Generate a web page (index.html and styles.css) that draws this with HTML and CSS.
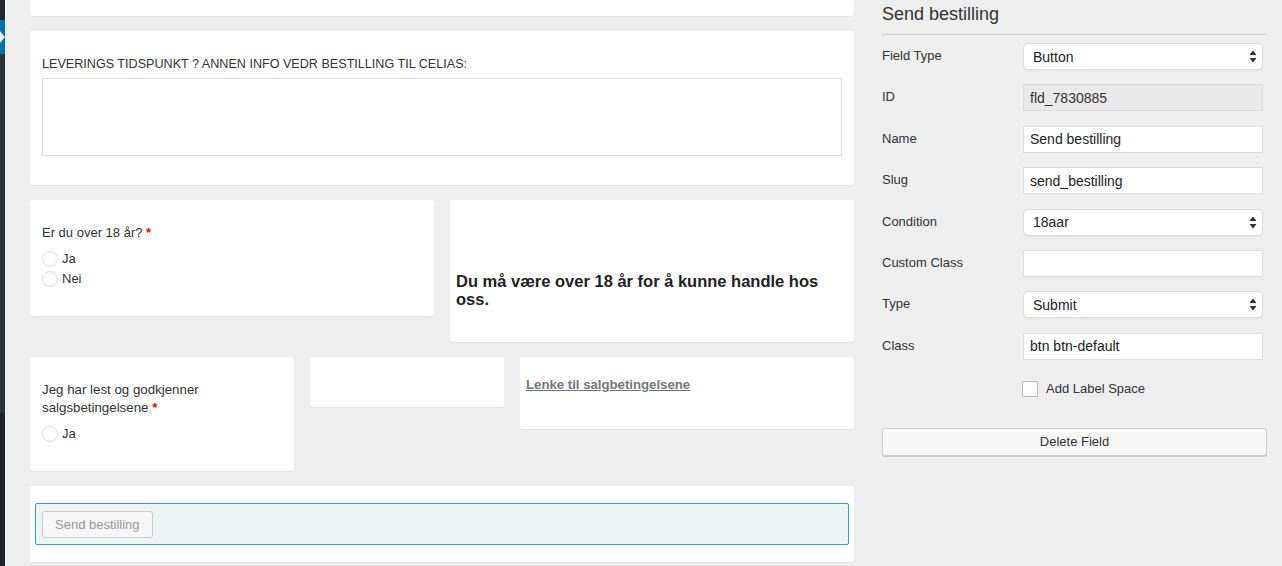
FILE: index.html
```html
<!DOCTYPE html>
<html lang="no">
<head>
<meta charset="utf-8">
<title>Send bestilling</title>
<link rel="stylesheet" href="styles.css">
</head>
<body>
<div class="app">
  <aside class="adminbar">
    <div class="ab-top"></div>
    <div class="ab-current"><span class="ab-arrow"></span></div>
    <div class="ab-sub"></div>
    <div class="ab-rest"></div>
  </aside>

  <main class="canvas">
    <div class="row">
      <div class="card card-cut w-full"></div>
    </div>

    <div class="row">
      <div class="card card-textarea w-full">
        <div class="lbl lbl-upper">LEVERINGS TIDSPUNKT ? ANNEN INFO VEDR BESTILLING TIL CELIAS:</div>
        <div class="textarea"></div>
      </div>
    </div>

    <div class="row">
      <div class="card card-radio w-half">
        <div class="lbl">Er du over 18 år? <span class="req">*</span></div>
        <div class="radio"><span class="radio-dot"></span>Ja</div>
        <div class="radio"><span class="radio-dot"></span>Nei</div>
      </div>
      <div class="card card-html w-half">
        <p class="notice">Du må være over 18 år for å kunne handle hos oss.</p>
      </div>
    </div>

    <div class="row">
      <div class="card card-terms w-264">
        <div class="lbl-wrap">
          <div class="lbl-line">Jeg har lest og godkjenner</div>
          <div class="lbl-line"><span>salgsbetingelsene</span> <span class="req">*</span></div>
        </div>
        <div class="radio"><span class="radio-dot"></span>Ja</div>
      </div>
      <div class="card card-empty w-194"></div>
      <div class="card card-link w-334">
        <a class="terms-link">Lenke til salgbetingelsene</a>
      </div>
    </div>

    <div class="row">
      <div class="card card-submit w-full">
        <div class="selected-field">
          <span class="btn-preview">Send bestilling</span>
        </div>
      </div>
    </div>
  </main>

  <section class="panel">
    <h2 class="panel-title">Send bestilling</h2>
    <div class="panel-rows">
      <div class="prow">
        <span class="plabel">Field Type</span>
        <div class="ctl select">Button<svg class="caret" width="8" height="13" viewBox="0 0 8 13"><path d="M4 0.5 L7.5 5 H0.5 Z M4 12.5 L7.5 8 H0.5 Z" fill="#333"/></svg></div>
      </div>
      <div class="prow">
        <span class="plabel">ID</span>
        <div class="ctl input readonly">fld_7830885</div>
      </div>
      <div class="prow">
        <span class="plabel">Name</span>
        <div class="ctl input">Send bestilling</div>
      </div>
      <div class="prow">
        <span class="plabel">Slug</span>
        <div class="ctl input">send_bestilling</div>
      </div>
      <div class="prow">
        <span class="plabel">Condition</span>
        <div class="ctl select">18aar<svg class="caret" width="8" height="13" viewBox="0 0 8 13"><path d="M4 0.5 L7.5 5 H0.5 Z M4 12.5 L7.5 8 H0.5 Z" fill="#333"/></svg></div>
      </div>
      <div class="prow">
        <span class="plabel">Custom Class</span>
        <div class="ctl input"></div>
      </div>
      <div class="prow">
        <span class="plabel">Type</span>
        <div class="ctl select">Submit<svg class="caret" width="8" height="13" viewBox="0 0 8 13"><path d="M4 0.5 L7.5 5 H0.5 Z M4 12.5 L7.5 8 H0.5 Z" fill="#333"/></svg></div>
      </div>
      <div class="prow">
        <span class="plabel">Class</span>
        <div class="ctl input">btn btn-default</div>
      </div>
    </div>
    <div class="check-row">
      <span class="checkbox"></span>
      <span class="check-label">Add Label Space</span>
    </div>
    <div class="delete-btn">Delete Field</div>
  </section>
</div>
</body>
</html>
```

FILE: styles.css
```css
* { box-sizing: border-box; }

html, body {
  margin: 0;
  padding: 0;
  height: 100%;
}

body {
  background: #eeeeee;
  font-family: "Liberation Sans", Arial, sans-serif;
  font-size: 13px;
  color: #333;
  overflow: hidden;
}

.app {
  display: flex;
  width: 1282px;
  height: 566px;
}

/* left admin strip */
.adminbar {
  width: 5px;
  flex: 0 0 5px;
  display: flex;
  flex-direction: column;
}
.ab-top { height: 20px; background: #23282d; }
.ab-current {
  height: 34px;
  background: #0073aa;
  position: relative;
}
.ab-arrow {
  position: absolute;
  left: 0;
  top: 11px;
  width: 0;
  height: 0;
  border-top: 6px solid transparent;
  border-bottom: 6px solid transparent;
  border-left: 5px solid #eeeeee;
}
.ab-sub { height: 359px; background: #2c3338; }
.ab-rest { flex: 1; background: #1f2327; }

/* canvas with cards */
.canvas {
  width: 861px;
  flex: 0 0 861px;
  padding: 0 12px 0 25px;
  display: flex;
  flex-direction: column;
  gap: 15px;
}

.row {
  display: flex;
  gap: 16px;
  align-items: flex-start;
}

.card {
  background: #fff;
  border-radius: 3px;
  box-shadow: 0 1px 1px rgba(0, 0, 0, 0.04);
}

.w-full { width: 824px; }
.w-half { width: 404px; }
.w-264 { width: 264px; }
.w-194 { width: 194px; }
.w-334 { width: 334px; }

.card-cut {
  height: 16px;
  border-radius: 0 0 3px 3px;
}

.lbl {
  line-height: 16px;
  color: #333;
}
.lbl-upper {
  font-size: 12.6px;
}

.req {
  color: #e00;
  font-weight: bold;
}

.card-textarea {
  padding: 25px 12px 29px;
}
.card-textarea .lbl {
  margin-bottom: 6px;
}
.textarea {
  height: 78px;
  border: 1px solid #ddd;
  background: #fff;
}

.card-radio {
  padding: 25px 12px 27px;
}
.card-radio .lbl { margin-bottom: 8px; }

.radio {
  display: flex;
  align-items: center;
  height: 20px;
  line-height: 20px;
}
.radio-dot {
  width: 16px;
  height: 16px;
  border: 1px solid #dedede;
  border-radius: 50%;
  background: #fff;
  margin-right: 4px;
}

.card-html {
  height: 142px;
  padding: 72px 14px 0 6px;
}
.notice {
  margin: 0;
  font-size: 16.5px;
  font-weight: bold;
  line-height: 18px;
  color: #222;
}

.card-terms {
  padding: 24px 12px 27px;
}
.lbl-wrap {
  margin-bottom: 7px;
  color: #333;
  font-size: 13.3px;
}
.lbl-line {
  line-height: 18px;
  height: 18px;
}

.card-empty { height: 50px; }

.card-link {
  height: 72px;
  padding: 20px 6px 0;
}
.terms-link {
  font-weight: bold;
  font-size: 13.2px;
  color: #73777a;
  text-decoration: underline;
  line-height: 16px;
}

.card-submit {
  height: 76px;
  padding: 17px 5px;
}
.selected-field {
  height: 42px;
  border: 1px solid #2e9fd0;
  border-radius: 2px;
  background: #ebf3f3;
  padding: 7px 6px;
  display: flex;
  align-items: flex-start;
}
.btn-preview {
  height: 27px;
  line-height: 25px;
  padding: 0 12px;
  border: 1px solid #ccc;
  border-radius: 3px;
  background: #f6f6f6;
  color: #999;
  font-size: 13px;
}

/* right settings panel */
.panel {
  flex: 1;
  padding: 3px 15px 0 16px;
}
.panel-title {
  margin: 0;
  font-size: 18px;
  font-weight: normal;
  line-height: 22px;
  color: #333;
  padding-bottom: 9px;
  border-bottom: 1px solid #cfcfcf;
}
.panel-rows {
  margin-top: 8px;
  display: flex;
  flex-direction: column;
  gap: 14.4px;
  width: 381px;
}
.prow {
  display: flex;
  align-items: center;
  height: 27px;
}
.plabel {
  width: 141px;
  flex: 0 0 141px;
  color: #333;
  position: relative;
  top: -1px;
}
.ctl {
  width: 240px;
  height: 27px;
  font-size: 14px;
  color: #222;
  background: #fff;
  border: 1px solid #ddd;
  display: flex;
  align-items: center;
}
.input {
  padding: 0 6px;
}
.readonly {
  background: #e9e9e9;
  color: #333;
  border-color: #dcdcdc;
}
.select {
  position: relative;
  padding: 0 9px;
  border-radius: 5px;
  border-color: #dadada;
  box-shadow: 0 1px 1px rgba(0, 0, 0, 0.04);
}
.caret {
  position: absolute;
  right: 5px;
  top: 6px;
}

.check-row {
  display: flex;
  align-items: center;
  margin: 21px 0 0 140px;
  height: 16px;
}
.checkbox {
  width: 16px;
  height: 16px;
  border: 1px solid #b4b9be;
  border-radius: 1px;
  background: #fff;
  margin-right: 8px;
}
.check-label { color: #333; }

.delete-btn {
  margin-top: 31px;
  width: 385px;
  height: 28px;
  line-height: 26px;
  text-align: center;
  border: 1px solid #ccc;
  border-radius: 3px;
  background: #f7f7f7;
  box-shadow: 0 1px 0 #ccc;
  color: #333;
}
```
